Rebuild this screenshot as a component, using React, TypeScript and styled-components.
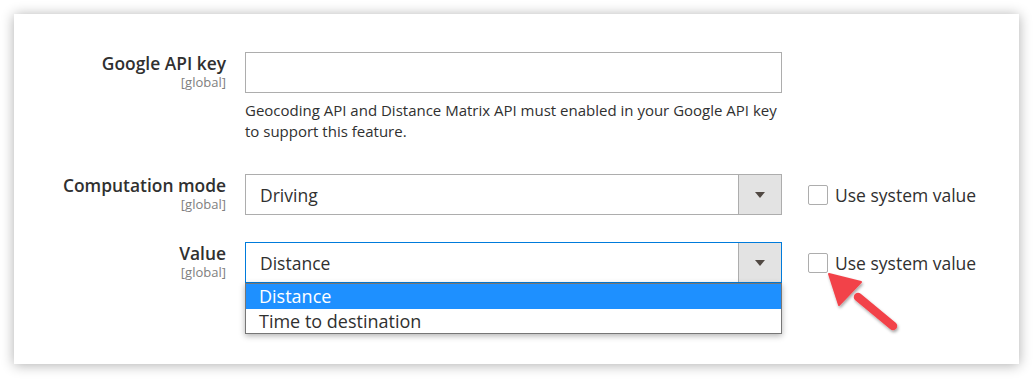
import React from "react";
import styled, { createGlobalStyle } from "styled-components";

const Global = createGlobalStyle`
  html, body { margin: 0; padding: 0; background: #ffffff; }
  body { font-family: "Open Sans", "Noto Sans", sans-serif; color: #303030; }
`;

const Page = styled.div`
  padding: 14px 14px 15px 14px;
  width: 1005px;
`;

const Card = styled.div`
  position: relative;
  background: #ffffff;
  box-shadow: 0 1px 12px rgba(0, 0, 0, 0.32);
  padding: 38px 0 81px 0;
  display: flex;
  flex-direction: column;
`;

const Row = styled.div<{ $gap?: number }>`
  display: flex;
  align-items: flex-start;
  margin-top: ${(p) => p.$gap ?? 0}px;
`;

const LabelCol = styled.div`
  width: 212px;
  margin-right: 19px;
  text-align: right;
  padding-top: 0;
  display: flex;
  flex-direction: column;
  align-items: flex-end;
`;

const LabelText = styled.span`
  font-size: 17.4px;
  font-weight: 600;
  line-height: 23px;
  color: #303030;
`;

const Scope = styled.span`
  font-size: 13px;
  line-height: 14px;
  color: #808080;
`;

const ControlCol = styled.div`
  position: relative;
  width: 537px;
`;

const TextInput = styled.div`
  box-sizing: border-box;
  height: 41px;
  border: 1px solid #adadad;
  background: #fff;
`;

const Note = styled.div`
  margin-top: 7px;
  font-size: 15px;
  line-height: 21px;
  color: #303030;
`;

const Select = styled.div<{ $focused?: boolean }>`
  box-sizing: border-box;
  height: 41px;
  border: 1px solid ${(p) => (p.$focused ? "#007bdb" : "#adadad")};
  background: #fff;
  display: flex;
  align-items: stretch;
`;

const SelectValue = styled.div`
  flex: 1;
  display: flex;
  align-items: center;
  padding-left: 14px;
  font-size: 17.5px;
  color: #303030;
`;

const SelectButton = styled.div`
  width: 42px;
  background: #e3e3e3;
  border-left: 1px solid #adadad;
  display: flex;
  align-items: center;
  justify-content: center;
`;

const Caret = styled.span`
  width: 0;
  height: 0;
  border-left: 5px solid transparent;
  border-right: 5px solid transparent;
  border-top: 6px solid #514943;
`;

const CheckCol = styled.label`
  display: flex;
  align-items: center;
  height: 41px;
  margin-left: 26px;
  gap: 7px;
  font-size: 17.5px;
  color: #303030;
`;

const Box = styled.span`
  box-sizing: border-box;
  width: 20px;
  height: 20px;
  border: 1px solid #adadad;
  border-radius: 2px;
  background: #fff;
`;

const Dropdown = styled.ul`
  position: absolute;
  left: 0;
  right: 0;
  top: 41px;
  margin: 0;
  padding: 0;
  list-style: none;
  background: #fff;
  border: 1px solid #767676;
  box-shadow: 0 2px 6px rgba(0, 0, 0, 0.3);
  z-index: 2;
`;

const Option = styled.li<{ $active?: boolean }>`
  height: ${(p) => (p.$active ? 25 : 24)}px;
  line-height: ${(p) => (p.$active ? 25 : 24)}px;
  padding-left: 13px;
  font-size: 18px;
  background: ${(p) => (p.$active ? "#1e90ff" : "#fff")};
  color: ${(p) => (p.$active ? "#fff" : "#303030")};
`;

const Pointer = styled.svg`
  position: absolute;
  left: 806px;
  top: 252px;
  overflow: visible;
  z-index: 3;
`;

function CheckField() {
  return (
    <CheckCol>
      <Box />
      <span>Use system value</span>
    </CheckCol>
  );
}

export default function App() {
  return (
    <>
      <Global />
      <Page>
        <Card>
          <Row>
            <LabelCol>
              <LabelText>Google API key</LabelText>
              <Scope>[global]</Scope>
            </LabelCol>
            <ControlCol>
              <TextInput />
              <Note>
                Geocoding API and Distance Matrix API must enabled in your Google API key
                <br />
                to support this feature.
              </Note>
            </ControlCol>
          </Row>
          <Row $gap={32}>
            <LabelCol>
              <LabelText>Computation mode</LabelText>
              <Scope>[global]</Scope>
            </LabelCol>
            <ControlCol>
              <Select>
                <SelectValue>Driving</SelectValue>
                <SelectButton>
                  <Caret />
                </SelectButton>
              </Select>
            </ControlCol>
            <CheckField />
          </Row>
          <Row $gap={27}>
            <LabelCol>
              <LabelText>Value</LabelText>
              <Scope>[global]</Scope>
            </LabelCol>
            <ControlCol>
              <Select $focused>
                <SelectValue>Distance</SelectValue>
                <SelectButton>
                  <Caret />
                </SelectButton>
              </Select>
              <Dropdown>
                <Option $active>Distance</Option>
                <Option>Time to destination</Option>
              </Dropdown>
            </ControlCol>
            <CheckField />
          </Row>
          <Pointer width="90" height="80" viewBox="0 0 90 80">
            <defs>
              <filter id="sh" x="-20%" y="-20%" width="140%" height="140%">
                <feDropShadow dx="1" dy="2" stdDeviation="1.5" floodColor="#000" floodOpacity="0.35" />
              </filter>
            </defs>
            <g filter="url(#sh)" fill="#f2434a" stroke="#f2434a">
              <line x1="73" y1="60" x2="38" y2="31" strokeWidth="8.5" strokeLinecap="round" />
              <polygon points="9,8 41,16 19,39" strokeWidth="2" strokeLinejoin="round" />
            </g>
          </Pointer>
        </Card>
      </Page>
    </>
  );
}
